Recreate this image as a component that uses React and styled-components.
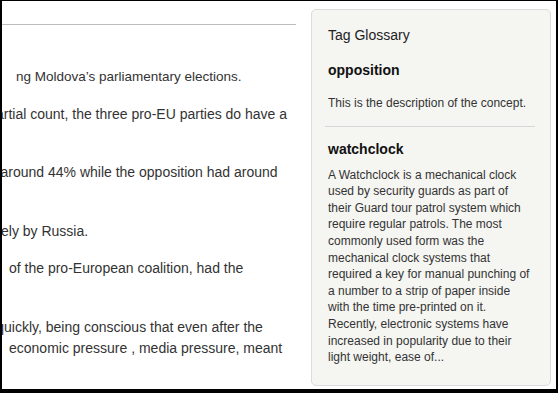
import React from "react";
import styled, { createGlobalStyle } from "styled-components";

const paragraphs = [
  { size: 13.5, lines: [{ indent: 14, text: "ng Moldova’s parliamentary elections." }] },
  {
    lines: [
      { indent: -6, text: "artial count, the three pro-EU parties do have a" },
      { indent: 0, text: "" },
    ],
  },
  {
    lines: [
      { indent: -1.5, text: "around 44% while the opposition had around" },
      { indent: 0, text: "" },
    ],
  },
  { lines: [{ indent: -1, text: "ely by Russia." }] },
  {
    lines: [
      { indent: 7, text: "of the pro-European coalition, had the" },
      { indent: 0, text: "" },
    ],
  },
  {
    lines: [
      { indent: -5.8, text: "quickly, being conscious that even after the" },
      { indent: 7, text: "economic pressure , media pressure, meant" },
    ],
  },
];

const concepts = [
  {
    name: "opposition",
    gap: 15,
    text: "This is the description of the concept.",
  },
  {
    name: "watchclock",
    gap: 8,
    text:
      "A Watchclock is a mechanical clock used by security guards as part of their Guard tour patrol system which require regular patrols. The most commonly used form was the mechanical clock systems that required a key for manual punching of a number to a strip of paper inside with the time pre-printed on it. Recently, electronic systems have increased in popularity due to their light weight, ease of...",
  },
];

const App = () => {
  return (
    <>
      <GlobalStyle />
      <Frame>
        <Main>
          <TopBar />
          <Article>
            {paragraphs.map((p, i) => (
              <Para key={i} $size={p.size || 14}>
                {p.lines.map((l, j) => (
                  <Line key={j} $indent={l.indent}>
                    {l.text}
                  </Line>
                ))}
              </Para>
            ))}
          </Article>
        </Main>

        <Glossary>
          <GlossaryTitle>Tag Glossary</GlossaryTitle>
          {concepts.map((c, i) => (
            <React.Fragment key={c.name}>
              {i > 0 && <Divider />}
              <ConceptName $first={i === 0}>{c.name}</ConceptName>
              <ConceptText $gap={c.gap}>{c.text}</ConceptText>
            </React.Fragment>
          ))}
        </Glossary>
      </Frame>
    </>
  );
};

export default App;

// STYLES

const GlobalStyle = createGlobalStyle`
  html, body {
    margin: 0;
    padding: 0;
    background: #000;
  }
  body {
    padding: 1px 2px 4px 2px;
    font-family: "Liberation Sans", Arial, sans-serif;
  }
`;

const Frame = styled.div`
  display: flex;
  height: 388px;
  background: #fff;
  overflow: hidden;
`;

const Main = styled.div`
  width: 294px;
  flex-shrink: 0;
  display: flex;
  flex-direction: column;
`;

const TopBar = styled.div`
  height: 23px;
  border-bottom: 1px solid #bdbdbd;
  flex-shrink: 0;
`;

const Article = styled.div`
  padding-top: 41px;
  overflow: hidden;
  color: #333;
  line-height: 21px;
`;

const Para = styled.div`
  margin: 0 0 16.5px;
  font-size: ${(p) => p.$size}px;
`;

const Line = styled.div`
  white-space: nowrap;
  min-height: 21px;
  text-indent: ${(p) => p.$indent}px;
`;

const Glossary = styled.aside`
  width: 240px;
  flex-shrink: 0;
  box-sizing: border-box;
  margin: 8px 5px 3px 15px;
  padding: 15px 18px 16px 16px;
  background: #f5f5f2;
  border: 1px solid #dcdcdc;
  border-radius: 5px;
  color: #333;
`;

const GlossaryTitle = styled.div`
  font-size: 14px;
  line-height: 20px;
  color: #222;
`;

const ConceptName = styled.h3`
  margin: ${(p) => (p.$first ? "15px" : "0")} 0 0;
  font-size: 14px;
  line-height: 20px;
  font-weight: bold;
  color: #111;
`;

const ConceptText = styled.p`
  margin: ${(p) => p.$gap}px 0 0;
  font-size: 12px;
  line-height: 16.6px;
  color: #333;
`;

const Divider = styled.div`
  height: 1px;
  background: #d6d6d6;
  margin: 14px -3px 12px;
`;
